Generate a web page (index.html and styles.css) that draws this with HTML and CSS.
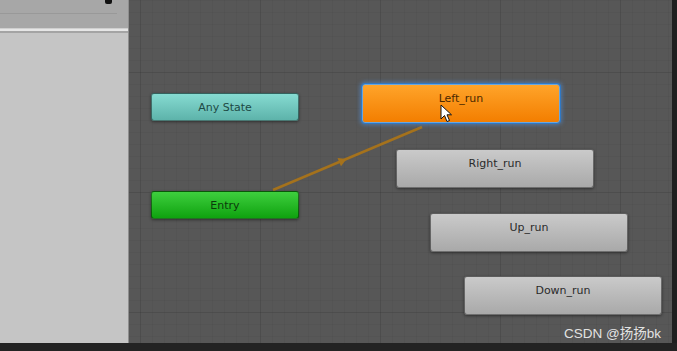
FILE: index.html
```html
<!DOCTYPE html>
<html lang="en">
<head>
    <meta charset="UTF-8">
    <meta name="viewport" content="width=device-width, initial-scale=1.0">
    <title>Animator</title>
    <link rel="stylesheet" href="styles.css">
</head>
<body>
    <div class="window">
        <div class="main">
            <div class="sidebar">
                <div class="sidebar-top">
                    <span class="lock"></span>
                    <div class="rule"></div>
                </div>
                <div class="sidebar-split"></div>
                <div class="sidebar-body"></div>
            </div>

            <div class="canvas">
                <svg class="links" width="543" height="343" viewBox="0 0 543 343">
                    <line x1="144" y1="190" x2="293" y2="127" stroke="#a5721c" stroke-width="2.5"/>
                    <polygon points="5,0 -3,-4.5 -3,4.5" fill="#a5721c" transform="translate(213 161) rotate(-22.9)"/>
                </svg>

                <div class="node any-state" style="left: 22px; top: 93px;">Any State</div>
                <div class="node entry" style="left: 22px; top: 191px;">Entry</div>
                <div class="node state selected" style="left: 233px; top: 84px;">Left_run</div>
                <div class="node state" style="left: 267px; top: 149px;">Right_run</div>
                <div class="node state" style="left: 301px; top: 213px;">Up_run</div>
                <div class="node state" style="left: 335px; top: 276px;">Down_run</div>

                <svg class="cursor" width="14" height="20" viewBox="0 0 14 20">
                    <path d="M1 1 L1 15 L4.5 11.5 L7 17.5 L9.5 16.5 L7 10.8 L11.5 10.8 Z" fill="#fff" stroke="#111" stroke-width="1" stroke-linejoin="round"/>
                </svg>

                <div class="watermark">CSDN @扬扬bk</div>
            </div>

            <div class="edge"></div>
        </div>
        <div class="statusbar"></div>
    </div>
</body>
</html>
```

FILE: styles.css
```css
body {
    margin: 0;
    background: #222;
    font-family: "DejaVu Sans", Verdana, sans-serif;
}
.window {
    width: 677px;
    height: 351px;
    display: flex;
    flex-direction: column;
    overflow: hidden;
}
.main {
    display: flex;
    height: 343px;
}
.statusbar {
    flex: 1;
    background: #232323;
}

/* left panel */
.sidebar {
    width: 128px;
    display: flex;
    flex-direction: column;
    border-right: 1px solid #8e8e8e;
}
.sidebar-top {
    position: relative;
    height: 28px;
    background: #a7a7a7;
}
.sidebar-top .rule {
    position: absolute;
    left: 0;
    top: 13px;
    width: 117px;
    height: 1px;
    background: #999;
}
.lock {
    position: absolute;
    left: 105px;
    top: -3px;
    width: 7px;
    height: 7px;
    border-radius: 2px;
    background: #111;
}
.sidebar-split {
    height: 5px;
    background: linear-gradient(#cfcfcf 0, #cfcfcf 1px, #e6e6e6 1px, #e6e6e6 3px, #a4a4a4 3px);
}
.sidebar-body {
    flex: 1;
    background: #c5c5c5;
}

/* graph area */
.canvas {
    position: relative;
    flex: 1;
    background-color: #575757;
    background-image:
        linear-gradient(rgba(0, 0, 0, 0.08) 1px, transparent 1px),
        linear-gradient(90deg, rgba(0, 0, 0, 0.08) 1px, transparent 1px),
        linear-gradient(rgba(0, 0, 0, 0.035) 1px, transparent 1px),
        linear-gradient(90deg, rgba(0, 0, 0, 0.035) 1px, transparent 1px);
    background-size: 120px 120px, 120px 120px, 12px 12px, 12px 12px;
    background-position: 11px 72px, 11px 72px, 11px 0, 11px 0;
}
.edge {
    width: 5px;
    background: #1f1f1f;
}
.links {
    position: absolute;
    left: 0;
    top: 0;
}

.node {
    position: absolute;
    box-sizing: border-box;
    width: 148px;
    height: 28px;
    line-height: 27px;
    font-size: 11px;
    text-align: center;
    border-radius: 3px;
    border: 1px solid rgba(0, 0, 0, 0.45);
    box-shadow: 0 1px 3px rgba(0, 0, 0, 0.45);
}
.any-state {
    background: linear-gradient(#86dbd1, #5db3aa);
    color: #1d4a45;
}
.entry {
    background: linear-gradient(#3ecf3e, #0fa20f);
    color: #0b3a0b;
}
.state {
    width: 198px;
    height: 39px;
    background: linear-gradient(#cacaca, #a9a9a9);
    color: #2a2a2a;
}
.selected {
    background: linear-gradient(#ffa42a, #f37e00);
    color: #4a2800;
    border: 1px solid #6aa6de;
    box-shadow: 0 0 0 1px #2f78c4, 0 0 4px 2px rgba(80, 150, 230, 0.55);
}

.cursor {
    position: absolute;
    left: 311px;
    top: 104px;
}
.watermark {
    position: absolute;
    right: 11px;
    bottom: 1px;
    font-family: "Liberation Sans", "Noto Sans CJK SC", sans-serif;
    font-size: 13.5px;
    color: rgba(245, 245, 245, 0.9);
}
```
